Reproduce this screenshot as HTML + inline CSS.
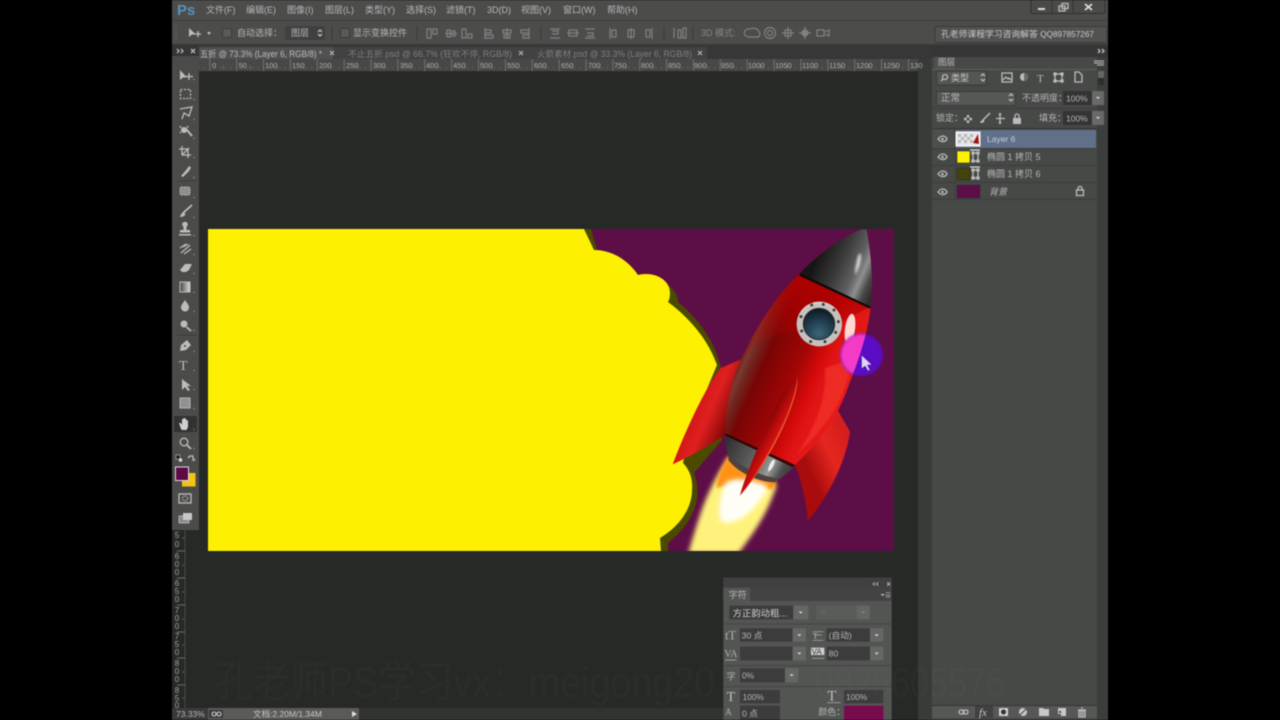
<!DOCTYPE html>
<html lang="zh"><head><meta charset="utf-8"><title>Photoshop</title>
<style>
html,body{margin:0;padding:0;width:1280px;height:720px;overflow:hidden;background:#000}
svg{display:block;position:absolute;left:0;top:0;font-family:"Liberation Sans","Noto Sans CJK SC",sans-serif;filter:blur(.5px)}
text{fill:#b6b6b6;font-size:9px}
.d{fill:#858585}
.r{font-size:7.5px;fill:#adadad}
.v{font-size:8px;fill:#a0a0a0;text-anchor:middle}
.i{fill:none;stroke:#bcbcbc;stroke-width:1.3}
.f{fill:#bcbcbc}
.a{fill:none;stroke:#808080;stroke-width:1.2}
</style></head><body>
<svg width="1280" height="720" viewBox="0 0 1280 720" xmlns="http://www.w3.org/2000/svg">
<defs>
<pattern id="maj" x="209.3" y="0" width="26.87" height="14" patternUnits="userSpaceOnUse"><rect width="1" height="14" fill="#8a8a8a"/><rect x="13.4" y="9" width="1" height="4" fill="#7a7a7a"/><rect x="5.4" y="11" width="1" height="2" fill="#6c6c6c"/><rect x="10.7" y="11" width="1" height="2" fill="#6c6c6c"/><rect x="16" y="11" width="1" height="2" fill="#6c6c6c"/><rect x="21.4" y="11" width="1" height="2" fill="#6c6c6c"/></pattern>
<linearGradient id="body" gradientUnits="userSpaceOnUse" x1="215" y1="405" x2="600" y2="575"><stop offset="0" stop-color="#a81a10"/><stop offset=".035" stop-color="#6a1410"/><stop offset=".09" stop-color="#7a3a32"/><stop offset=".14" stop-color="#70241e"/><stop offset=".22" stop-color="#780505"/><stop offset=".45" stop-color="#a20606"/><stop offset=".58" stop-color="#d40a0a"/><stop offset=".66" stop-color="#e01414"/><stop offset=".93" stop-color="#e8201e"/><stop offset="1" stop-color="#ff7a40"/></linearGradient>
<linearGradient id="top" gradientUnits="userSpaceOnUse" x1="440" y1="150" x2="430" y2="420"><stop offset="0" stop-color="#b00000"/><stop offset="1" stop-color="#b00000" stop-opacity="0"/></linearGradient>
<linearGradient id="nose" gradientUnits="userSpaceOnUse" x1="470" y1="100" x2="650" y2="180"><stop offset="0" stop-color="#161616"/><stop offset=".35" stop-color="#3a3a3a"/><stop offset=".62" stop-color="#626262"/><stop offset=".74" stop-color="#8f8f8f"/><stop offset=".87" stop-color="#484848"/><stop offset="1" stop-color="#2c2c2c"/></linearGradient>
<linearGradient id="finl" gradientUnits="userSpaceOnUse" x1="90" y1="520" x2="250" y2="590"><stop offset="0" stop-color="#c81212"/><stop offset=".4" stop-color="#e02020"/><stop offset=".72" stop-color="#960b0b"/><stop offset="1" stop-color="#300404"/></linearGradient>
<linearGradient id="finr" gradientUnits="userSpaceOnUse" x1="430" y1="700" x2="560" y2="640"><stop offset="0" stop-color="#a80c0c"/><stop offset=".55" stop-color="#e6261f"/><stop offset="1" stop-color="#d51e1e"/></linearGradient>
<linearGradient id="base" gradientUnits="userSpaceOnUse" x1="200" y1="650" x2="400" y2="750"><stop offset="0" stop-color="#303030"/><stop offset=".5" stop-color="#6a6a6a"/><stop offset=".68" stop-color="#9a9a9a"/><stop offset=".83" stop-color="#4d4d4d"/><stop offset="1" stop-color="#333"/></linearGradient>
<linearGradient id="cf" gradientUnits="userSpaceOnUse" x1="300" y1="620" x2="365" y2="655"><stop offset="0" stop-color="#7e0404"/><stop offset=".55" stop-color="#c80d0d"/><stop offset="1" stop-color="#e62a1e"/></linearGradient>
<radialGradient id="glass" cx=".5" cy=".8" r=".75"><stop offset="0" stop-color="#3d6478"/><stop offset=".6" stop-color="#1e3b4c"/><stop offset="1" stop-color="#0f1d26"/></radialGradient>
<linearGradient id="grad" x1="0" y1="0" x2="1" y2="0"><stop offset="0" stop-color="#444"/><stop offset="1" stop-color="#ddd"/></linearGradient>
<clipPath id="cv"><rect x="208" y="229" width="686" height="322"/></clipPath>
<clipPath id="bc"><path transform="translate(660 225) scale(.3333)" d="M420 145C350 210 285 310 240 410C210 480 197 560 197 625L405 720C470 660 530 590 570 470C595 410 625 320 632 245Z"/></clipPath>
<filter id="b8" x="-30%" y="-30%" width="160%" height="160%"><feGaussianBlur stdDeviation="7"/></filter>
<filter id="b4" x="-30%" y="-30%" width="160%" height="160%"><feGaussianBlur stdDeviation="4"/></filter>
<filter id="b2" x="-30%" y="-30%" width="160%" height="160%"><feGaussianBlur stdDeviation="2"/></filter>
<filter id="b1" x="-30%" y="-30%" width="160%" height="160%"><feGaussianBlur stdDeviation="1.3"/></filter>
</defs>

<rect width="1280" height="720" fill="#000"/>
<rect x="172" y="0" width="936" height="720" fill="#272927"/>
<rect x="172" y="0" width="936" height="46" fill="#4c4d4b"/>
<rect x="172" y="20" width="936" height="1" fill="#3d3e3c"/>
<rect x="172" y="44" width="936" height="2" fill="#383938"/>
<rect x="172" y="45" width="27" height="485" fill="#4b4c4a"/>
<rect x="172" y="45" width="27" height="11" fill="#353635"/>
<rect x="199" y="46" width="733" height="13" fill="#363736"/>
<rect x="199" y="47" width="134" height="12" fill="#505150"/>
<rect x="333" y="47" width="374" height="12" fill="#414241"/>
<rect x="199" y="59" width="719" height="13" fill="#484947"/>
<rect x="199" y="59" width="719" height="13" fill="url(#maj)" opacity=".6"/>
<rect x="199" y="71" width="719" height="1" fill="#2b2c2b"/>
<rect x="918" y="59" width="14" height="661" fill="#393b39"/>
<rect x="932" y="46" width="165" height="674" fill="#474947"/>
<rect x="1097" y="46" width="11" height="674" fill="#3c3e3c"/>
<rect x="932" y="46" width="176" height="11" fill="#353635"/>

<!-- Photoshop logo & menu -->
<text x="177" y="15" style="font-size:15px;font-weight:bold;fill:#5a90bd">Ps</text>
<text x="206" y="13">文件(F)</text><text x="246" y="13">编辑(E)</text><text x="287" y="13">图像(I)</text><text x="325" y="13">图层(L)</text><text x="365" y="13">类型(Y)</text><text x="406" y="13">选择(S)</text><text x="446" y="13">滤镜(T)</text><text x="487" y="13">3D(D)</text><text x="521" y="13">视图(V)</text><text x="563" y="13">窗口(W)</text><text x="607" y="13">帮助(H)</text>
<!-- window buttons -->
<rect x="1031" y="-2" width="74" height="15.500" rx="2" fill="#4a4b49" stroke="#2f302f"/>
<line x1="1052" y1="0" x2="1052" y2="13" stroke="#333"/><line x1="1073" y1="0" x2="1073" y2="13" stroke="#333"/>
<rect x="1038" y="8" width="7" height="2" fill="#ddd"/>
<rect x="1059" y="6" width="6" height="5" class="i"/><rect x="1062" y="3.500" width="6" height="5" class="i"/>
<path d="M1085 4L1092 10M1092 4L1085 10" stroke="#ddd" stroke-width="1.800"/>

<!-- Options bar -->
<path d="M176 26V41" stroke="#6c6c6c" stroke-dasharray="1 2" stroke-width="1.500"/>
<path d="M189 28V37L192 34.500H196Z" class="f"/><path d="M198 31V37M195 34H201" class="i" stroke-width="1"/>
<path d="M207 32H211L209 35Z" class="f"/>
<rect x="222.500" y="28.500" width="9" height="9" rx="1" fill="#5a5b59" stroke="#3a3b39"/>
<text x="237" y="36">自动选择：</text>
<rect x="285" y="26" width="40" height="14" rx="2" fill="#3f403f"/>
<text x="291" y="36">图层</text><path d="M318 32L320 30L322 32M318 34L320 36L322 34" class="i" stroke-width=".8"/>
<line x1="332" y1="26" x2="332" y2="41" stroke="#3a3b39"/>
<rect x="340.500" y="28.500" width="9" height="9" rx="1" fill="#5a5b59" stroke="#3a3b39"/>
<text x="353" y="36">显示变换控件</text>
<line x1="417" y1="26" x2="417" y2="41" stroke="#3a3b39"/>
<g class="a">
<path d="M427 29h4v9h-4zM433 29h4v5h-4z"/><path d="M445 33.500h12M447 30h3v7h-3zM452 31h3v5h-3z"/><path d="M462 29h4v9h-4zM468 34h4v4h-4z"/>
<path d="M485 28v11M485 30h6v3h-6zM485 35h8v3h-8z"/><path d="M507 28v11M503 30h8v3h-8zM504 35h6v3h-6z"/><path d="M529 28v11M521 30h8v3h-8zM523 35h6v3h-6z"/>
</g>
<line x1="541" y1="26" x2="541" y2="41" stroke="#3a3b39"/>
<g class="a">
<path d="M550 29h10M552 31h6v3h-6M550 38h10"/><path d="M567 33h12M569 30h8v6h-8z"/><path d="M585 38h10M587 33h6v3h-6M585 29h10"/>
<path d="M610 28v11M612 30h4v7h-4z"/><path d="M631 28v11M628 30h6v7h-6z"/><path d="M652 28v11M646 30h4v7h-4z"/>
</g>
<line x1="664" y1="26" x2="664" y2="41" stroke="#3a3b39"/>
<path class="a" d="M674 28v10M678 30h3v8h-3zM683 28h3v10h-3z"/>
<line x1="693" y1="26" x2="693" y2="41" stroke="#3a3b39"/>
<text x="701" y="36" class="d">3D 模式:</text>
<g class="a"><path d="M746 36a5 4 0 0 1 4-7a6 5 0 0 1 9 3a3 3 0 0 1-3 5h-8z"/><circle cx="770" cy="33" r="5.500"/><circle cx="770" cy="33" r="2.500"/><path d="M788 27v12M782 33h12M785 30h6v6h-6z"/><path d="M805 27v12M799 33h12"/><circle cx="805" cy="33" r="3" fill="#808080"/><path d="M817 30h7v6h-7zM825 32l4-2v6l-4-2"/></g>
<rect x="935" y="26.500" width="172" height="16" rx="1" fill="#525351" stroke="#393a39"/>
<text x="941" y="37" style="fill:#c8c8c8;font-size:8.800px">孔老师课程学习咨询解答 <tspan style="font-size:8.200px">QQ897857267</tspan></text>

<!-- Tabs -->
<text x="200" y="57" textLength="122" lengthAdjust="spacingAndGlyphs" style="font-size:8.800px;fill:#bcbcbc">五折 @ 73.3% (Layer 6, RGB/8) *</text>
<text x="348" y="57" textLength="164" lengthAdjust="spacingAndGlyphs" style="font-size:8.800px;fill:#7f7f7f">不止五折.psd @ 66.7% (狂欢不停, RGB/8)</text>
<text x="537" y="57" textLength="155" lengthAdjust="spacingAndGlyphs" style="font-size:8.800px;fill:#7f7f7f">火箭素材.psd @ 33.3% (Layer 6, RGB/8)</text>
<path d="M330 51l4 4M334 51l-4 4M519 51l4 4M523 51l-4 4M698 51l4 4M702 51l-4 4" stroke="#c0c0c0"/>
<path d="M177 49l2 2-2 2M181 49l2 2-2 2M191 49l4 4M195 49l-4 4" class="i" stroke-width=".8"/>
<path d="M1098 49l2 2-2 2M1102 49l2 2-2 2" class="i" stroke-width=".8"/>

<!-- Ruler labels -->
<g><text class="r" x="212" y="68">0</text><text class="r" x="238.500" y="68">50</text><text class="r" x="265" y="68">100</text><text class="r" x="292" y="68">150</text><text class="r" x="319" y="68">200</text><text class="r" x="346" y="68">250</text><text class="r" x="373" y="68">300</text><text class="r" x="400" y="68">350</text><text class="r" x="426" y="68">400</text><text class="r" x="453" y="68">450</text><text class="r" x="480" y="68">500</text><text class="r" x="507" y="68">550</text><text class="r" x="534" y="68">600</text><text class="r" x="561" y="68">650</text><text class="r" x="588" y="68">700</text><text class="r" x="614" y="68">750</text><text class="r" x="641" y="68">800</text><text class="r" x="668" y="68">850</text><text class="r" x="694" y="68">900</text><text class="r" x="721" y="68">950</text><text class="r" x="748" y="68">1000</text><text class="r" x="775" y="68">1050</text><text class="r" x="802" y="68">1100</text><text class="r" x="829" y="68">1150</text><text class="r" x="856" y="68">1200</text><text class="r" x="883" y="68">1250</text><text class="r" x="910" y="68">130</text></g>
<path d="M185 530V708" stroke="#4a4b49"/>
<path d="M177 551h8M177 578h8M177 605h8M177 632h8M177 658h8M177 685h8" stroke="#6c6c6c"/>
<path d="M182 538h3M182 565h3M182 592h3M182 619h3M182 645h3M182 672h3M182 698h3" stroke="#555"/>
<text class="v" x="177" y="538">5</text><text class="v" x="177" y="547">0</text>
<text class="v" x="177" y="559">6</text><text class="v" x="177" y="567">0</text><text class="v" x="177" y="575">0</text>
<text class="v" x="177" y="586">6</text><text class="v" x="177" y="594">5</text><text class="v" x="177" y="602">0</text>
<text class="v" x="177" y="613">7</text><text class="v" x="177" y="621">0</text><text class="v" x="177" y="629">0</text>
<text class="v" x="177" y="639">7</text><text class="v" x="177" y="647">5</text><text class="v" x="177" y="655">0</text>
<text class="v" x="177" y="666">8</text><text class="v" x="177" y="674">0</text><text class="v" x="177" y="682">0</text>
<text class="v" x="177" y="693">8</text><text class="v" x="177" y="701">5</text><text class="v" x="177" y="708">0</text>

<!-- Toolbar -->
<path d="M180 70V80L183 77.500H187Z" class="f"/><path d="M189 73v7M186 76.500h7" class="i"/>
<rect x="180.500" y="89.500" width="10" height="9" class="i" stroke-dasharray="2 1.500"/>
<path d="M180 109L192 107L189 116L184 113L182 119" class="i"/>
<path d="M186 129L192 136" stroke="#bcbcbc" stroke-width="2"/><circle cx="184" cy="130" r="3" class="f"/><path d="M180 126l1 2M188 126l-1 2M180 133l1-1" class="i" stroke-width=".8"/>
<path d="M182 146V155H191M179 149H188V158" class="i" stroke-width="1.600"/><path d="M182 155L189 148" class="i" stroke-width=".8"/>
<path d="M181 176L187 169L189 171L183 177ZM187 169L189 166L191 167.500L189 171" class="f"/>
<line x1="177" y1="181" x2="197" y2="181" stroke="#3b3c3a"/>
<rect x="180" y="187" width="10" height="8" rx="1.500" fill="#8f8f8f" stroke="#bcbcbc" stroke-dasharray="1.500 1"/>
<path d="M192 205L183 213" stroke="#bcbcbc" stroke-width="1.800"/><path d="M180 217C181 213 183 212 185 213C186 215 184 217 180 217Z" class="f"/>
<circle cx="185" cy="224.500" r="2.800" class="f"/><rect x="183.500" y="226" width="3" height="4" class="f"/><rect x="180" y="230" width="10" height="2.500" class="f"/><rect x="179" y="234" width="12" height="1.500" class="f"/>
<path d="M181 253L190 245M183 247L188 244M180 248L186 244" class="i"/><path d="M184 254L191 249" class="i"/>
<path d="M180 270L185 264H192L189 270L186 272H182Z" class="f"/>
<rect x="180" y="282" width="10" height="10" fill="url(#grad)" stroke="#bcbcbc"/>
<path d="M185 300C187 303 189 305 189 307.500A4 4 0 0 1 181 307.500C181 305 183 303 185 300Z" class="f"/>
<circle cx="184" cy="324" r="3.500" class="f"/><path d="M186.500 327L191 331" stroke="#bcbcbc" stroke-width="1.800"/>
<path d="M180 351L181 345L187 340L191 345L186 350Z" class="f"/><circle cx="185" cy="346" r="1" fill="#4b4c4a"/>
<line x1="177" y1="335" x2="197" y2="335" stroke="#3b3c3a"/>
<text x="179" y="370" style="font-size:14px;font-family:'Liberation Serif',serif;fill:#bcbcbc">T</text>
<path d="M182 379V390L185 387L188 391L190 390L187 386H191Z" class="f"/>
<rect x="180" y="398" width="10" height="10" fill="#919191" stroke="#b4b4b4"/>
<rect x="174" y="416" width="23" height="16" rx="1" fill="#313231"/>
<path d="M181 429L179 423L181 423L182 425V419H183.500V424V418H185V424V419H186.500V424V420.500H188V427L186.500 430H182Z" fill="#d0d0d0"/>
<circle cx="184" cy="442" r="3.800" class="i" fill="#888"/><path d="M187 445L191 449" stroke="#bcbcbc" stroke-width="1.800"/>
<rect x="176" y="455" width="4" height="4" fill="#111" stroke="#bbb" stroke-width=".7"/><rect x="178.500" y="458" width="4" height="4" fill="#ddd" stroke="#222" stroke-width=".5"/>
<path d="M189 456h4v4M188 458l2-2M193 461l2-2" class="i" stroke-width=".9"/>
<rect x="182" y="473" width="13.500" height="13.500" fill="#f4c414"/>
<rect x="175.500" y="467" width="13" height="13.500" fill="#5d0a45" stroke="#e4d6dc"/>
<rect x="179" y="494" width="12" height="9" class="i" stroke-width="1"/><circle cx="185" cy="498.500" r="2.500" class="i" stroke-dasharray="1 1" stroke-width=".9"/>
<rect x="179" y="516" width="10" height="7" fill="#8a8a8a" stroke="#bcbcbc" stroke-width=".8"/><rect x="183" y="513" width="9" height="7" fill="#c8c8c8"/>
<path d="M193 80l1.500-1.500v1.500zM193 100l1.500-1.500v1.500zM193 120l1.500-1.500v1.500zM193 139l1.500-1.500v1.500zM193 158l1.500-1.500v1.500zM193 178l1.500-1.500v1.500zM193 198l1.500-1.500v1.500zM193 218l1.500-1.500v1.500zM193 236l1.500-1.500v1.500zM193 255l1.500-1.500v1.500zM193 274l1.500-1.500v1.500zM193 293l1.500-1.500v1.500zM193 312l1.500-1.500v1.500zM193 331l1.500-1.500v1.500zM193 352l1.500-1.500v1.500zM193 371l1.500-1.500v1.500zM193 390l1.500-1.500v1.500zM193 409l1.500-1.500v1.500zM193 430l1.500-1.500v1.500zM193 449l1.500-1.500v1.500z" fill="#aaa"/>

<!-- Canvas -->
<rect x="208" y="229" width="686" height="322" fill="#5e0e47"/>
<g clip-path="url(#cv)">
<path d="M584 222H589L597 250L590 270L660 300L668 285C675 290 678 296 678 302C702 322 716 345 721 368L722 440L694 473C700 490 702 515 668 543L668 560H208V222Z" fill="#4b4b00"/>
<path d="M208 229H584L594 250C612 250 628 260 638 275C655 271 670 280 670 293C670 298 669 300 668 302C695 322 710 345 717 365L690 430L683 463C690 470 693 480 692 490C692 508 680 526 660 538L661 551H208Z" fill="#fdf000"/>
<g transform="translate(660 225) scale(.33333)">
<path d="M205 695C170 750 140 810 120 870C105 915 95 950 85 985H235C285 920 325 860 350 780L300 740Z" fill="#fff27c" filter="url(#b8)"/>
<path d="M205 695C185 730 170 760 170 790C220 770 300 785 335 795L350 770L290 730Z" fill="#ff9212" filter="url(#b4)"/>
<path d="M195 775C180 820 170 870 185 890C240 905 295 845 325 785C280 760 220 755 195 775Z" fill="#fffef6" filter="url(#b8)"/>
<path d="M250 400L180 430C130 500 75 620 38 718C90 695 150 660 195 630Z" fill="url(#finl)"/>
<path d="M530 550L570 620C560 700 510 810 443 888C440 830 425 780 415 745L405 720Z" fill="url(#finr)"/>
<path d="M197 625C196 650 198 675 207 695C240 730 310 765 360 762C375 750 395 735 405 720Z" fill="url(#base)"/>
<path d="M205 690C240 725 310 758 360 760L345 772C300 772 235 745 205 705Z" fill="#4f4240"/>
<path d="M338 705C328 718 322 732 325 740C335 735 345 718 345 705Z" fill="#eee"/>
<path d="M420 145C350 210 285 310 240 410C210 480 197 560 197 625L405 720C470 660 530 590 570 470C595 410 625 320 632 245Z" fill="url(#body)"/>
<path d="M420 145C350 210 285 310 240 410C300 340 380 300 470 330L632 245Z" fill="url(#top)"/>
<path d="M197 625L405 720L398 726L196 632Z" fill="#300404"/>
<path d="M495 430C500 520 470 600 410 690C470 630 530 570 560 470L580 400Z" fill="#f2302c" opacity=".75" filter="url(#b2)"/>
<path d="M420 145C480 80 560 30 605 13H620C635 100 640 180 632 245Z" fill="url(#nose)"/>
<path d="M420 145L632 245L630 251L418 152Z" fill="#0a0a0a"/>
<path d="M595 90C590 110 585 130 585 150C595 135 605 110 603 85Z" fill="#dcdcdc" filter="url(#b4)"/>
<ellipse cx="478" cy="297" rx="68" ry="67" fill="#d8d4d0"/><ellipse cx="478" cy="300" rx="68" ry="65" fill="#a39f9b" opacity=".35"/>
<circle cx="477" cy="297" r="47" fill="url(#glass)" stroke="#26282a" stroke-width="3"/>
<g fill="#3a3a3c"><circle cx="455" cy="240" r="4.500"/><circle cx="490" cy="238" r="4.500"/><circle cx="522" cy="255" r="4.500"/><circle cx="535" cy="290" r="4.500"/><circle cx="527" cy="322" r="4.500"/><circle cx="495" cy="350" r="4.500"/><circle cx="452" cy="350" r="4.500"/><circle cx="425" cy="318" r="4.500"/><circle cx="423" cy="275" r="4.500"/></g>
<ellipse cx="570" cy="312" rx="15" ry="46" transform="rotate(8 570 312)" fill="#ffd8d2"/>
<path d="M412 455C385 470 340 550 305 640C280 700 250 770 240 812C285 760 345 670 385 570C405 520 415 480 412 455Z" fill="url(#cf)"/>
<path d="M412 455C415 480 405 520 385 570C345 670 285 760 240 812C290 750 342 660 381 570C400 520 410 485 412 455Z" fill="#ee5a30"/>
<circle cx="605" cy="390" r="63" fill="#5a0fc4" filter="url(#b4)"/>
</g>
<g clip-path="url(#bc)"><circle cx="861.700" cy="355" r="21" fill="#f43ac8" filter="url(#b1)"/></g>
<path d="M861.500 355V369L865 366L868 371L870 370L867.500 365H872Z" fill="#ddd6f5" stroke="#40108a" stroke-width=".5"/>
</g>

<!-- Layers panel -->
<rect x="935" y="57" width="20" height="12" fill="#525351"/>
<text x="938" y="65" style="font-size:8.500px">图层</text>
<path d="M1094 61h10M1094 63h10M1097 65h7" stroke="#bcbcbc" stroke-width=".9"/>
<rect x="932" y="69" width="165" height="1" fill="#5d5f5d"/>
<rect x="936.500" y="71" width="50" height="14" rx="2" fill="#545654" stroke="#383938"/>
<circle cx="945" cy="77" r="2.500" class="i" stroke-width=".9"/><path d="M943 79l-2 2" class="i"/>
<text x="951" y="81" style="fill:#cccccc">类型</text><path d="M981 76l2-2 2 2M981 79l2 2 2-2" class="i" stroke-width=".8"/>
<g class="i" stroke-width="1"><rect x="1002" y="73" width="10" height="9"/><path d="M1003 80l3-3 2 2 1-1 2 2"/></g>
<circle cx="1024" cy="77" r="4" class="f"/><path d="M1024 73a4 4 0 0 1 0 8z" fill="#6a6a6a"/>
<text x="1037" y="82" style="font-size:11px;font-family:'Liberation Serif',serif;fill:#bcbcbc">T</text>
<path d="M1055 74h7v7h-7zM1054 73h2v2h-2zM1061 73h2v2h-2zM1054 80h2v2h-2zM1061 80h2v2h-2z" class="i" stroke-width=".8"/>
<path d="M1075 72h4l3 3v7h-7z" class="i" stroke-width="1"/>
<rect x="1098" y="71" width="6" height="7" fill="#666"/><rect x="1098" y="78" width="6" height="7" fill="#2c2d2c"/>
<rect x="936.500" y="91.500" width="79" height="14" rx="1" fill="#565856" stroke="#393a39"/>
<text x="941" y="101" style="font-size:9.500px">正常</text><path d="M1009 96l2-2 2 2M1009 99l2 2 2-2" class="i" stroke-width=".8"/>
<text x="1022" y="101">不透明度：</text>
<rect x="1063" y="91" width="29" height="14" fill="#333433"/><text x="1066" y="101.500" style="font-size:8.500px">100%</text>
<rect x="1092" y="91" width="12" height="14" fill="#686a68"/><path d="M1096 97h4l-2 2z" fill="#ddd"/>
<rect x="932" y="108" width="165" height="1" fill="#3b3c3b"/>
<text x="936" y="121">锁定：</text>
<rect x="964" y="115" width="8" height="8" fill="#bbb"/><path d="M964 115h2.700v2.700H964zM969.300 115h2.700v2.700h-2.700zM966.700 117.700h2.700v2.700h-2.700zM964 120.400h2.700v2.700H964zM969.300 120.400h2.700v2.700h-2.700z" fill="#454545"/>
<path d="M990 113L983 120" stroke="#bcbcbc" stroke-width="1.500"/><path d="M980 123C981 120 983 119 984 120C985 122 983 123 980 123Z" class="f"/>
<path d="M1000 114v9M996 118.500h9M999 115l1-1.500 1 1.500M999 122l1 1.500 1-1.500" class="i" stroke-width="1"/>
<rect x="1013" y="118" width="8" height="6" class="f"/><path d="M1015 118v-2a2 2 0 0 1 4 0v2" class="i" stroke-width="1.200"/>
<text x="1039" y="121">填充：</text>
<rect x="1063" y="111" width="29" height="14" fill="#333433"/><text x="1066" y="121.500" style="font-size:8.500px">100%</text>
<rect x="1092" y="111" width="12" height="14" fill="#686a68"/><path d="M1096 117h4l-2 2z" fill="#ddd"/>
<rect x="932" y="128" width="165" height="1" fill="#343534"/>
<rect x="955" y="130" width="141" height="18" fill="#607089"/>
<rect x="932" y="130" width="23" height="18" fill="#4d4f4d"/>
<path d="M932 148.500H1097M932 165.500H1097M932 182.500H1097M932 199.500H1097M955 130V200" stroke="#3c3d3c"/>
<g class="i" stroke-width=".9"><path d="M938 139C941 135 945 135 947 139C945 142.500 941 142.500 938 139Z"/><path d="M938 157C941 153 945 153 947 157C945 160.500 941 160.500 938 157Z"/><path d="M938 174C941 170 945 170 947 174C945 177.500 941 177.500 938 174Z"/><path d="M938 192C941 188 945 188 947 192C945 195.500 941 195.500 938 192Z"/></g>
<circle cx="942.500" cy="139" r="1.300" class="f"/><circle cx="942.500" cy="157" r="1.300" class="f"/><circle cx="942.500" cy="174" r="1.300" class="f"/><circle cx="942.500" cy="192" r="1.300" class="f"/>
<rect x="956" y="132" width="24" height="14" fill="#e6e6e6" stroke="#fff"/>
<path d="M958 134h3v3h-3zM964 134h3v3h-3zM970 134h3v3h-3zM961 137h3v3h-3zM967 137h3v3h-3zM958 140h3v3h-3zM964 140h3v3h-3zM970 140h3v3h-3z" fill="#b9b9b9"/>
<path d="M973 143L978 134L979 144Z" fill="#a01313"/>
<text x="987" y="142" style="font-size:8.500px;fill:#c8ced8">Layer 6</text>
<rect x="957" y="151" width="13" height="12" fill="#fdf000" stroke="#222" stroke-width=".5"/>
<rect x="957" y="168" width="13" height="12" fill="#43430a" stroke="#222" stroke-width=".5"/>
<path d="M970 150h10M970 167h10" stroke="#e0e0e0" stroke-width="1.200"/>
<path d="M973 153h5v8h-5zM972 152h2v2h-2zM977 152h2v2h-2zM972 160h2v2h-2zM977 160h2v2h-2zM973 170h5v8h-5zM972 169h2v2h-2zM977 169h2v2h-2zM972 177h2v2h-2zM977 177h2v2h-2z" class="i" stroke-width=".6"/>
<text x="987" y="160">椭圆 1 拷贝 5</text>
<text x="987" y="177">椭圆 1 拷贝 6</text>
<rect x="957" y="185" width="23" height="13" fill="#5e0e47" stroke="#2c2d2c" stroke-width=".6"/>
<text x="989" y="195" style="font-style:italic">背景</text>
<rect x="1076.500" y="190" width="7" height="5.500" class="i" stroke-width=".9"/><path d="M1078 190v-1.500a2 2 0 0 1 4 0v1.500" class="i" stroke-width=".9"/>
<!-- Layers bottom bar -->
<rect x="932" y="706" width="165" height="12" fill="#565856"/>
<rect x="975" y="706" width="18" height="12" fill="#404140"/>
<rect x="932" y="705" width="165" height="1" fill="#343534"/>
<rect x="959" y="710" width="5" height="4" rx="2" class="i" stroke-width=".9"/><rect x="963" y="710" width="5" height="4" rx="2" class="i" stroke-width=".9"/>
<text x="979" y="716" style="font-style:italic;font-family:'Liberation Serif',serif;font-size:11px;fill:#c8c8c8">fx</text>
<rect x="999" y="708" width="9" height="8" fill="#d0d0d0"/><circle cx="1003.500" cy="712" r="2.500" fill="#333"/>
<circle cx="1023" cy="712" r="4" fill="#c8c8c8"/><path d="M1020 715l6-6" stroke="#444"/>
<path d="M1039 708h4l1 1h5v7h-10z" fill="#c8c8c8"/>
<path d="M1058 708h8v8h-5v-2h-3z" fill="#c8c8c8"/><rect x="1059" y="711" width="2" height="2" fill="#444"/>
<path d="M1078 710h8M1081 708h2M1079 711h6v6h-6zM1081 712v4M1083 712v4" class="i" stroke-width=".9"/>

<!-- Status bar -->
<rect x="172" y="708" width="552" height="12" fill="#313331"/>
<rect x="208" y="708" width="151" height="12" fill="#5a5b59"/>
<rect x="172" y="708" width="36" height="12" fill="#393a39"/>
<text x="176" y="717" style="font-size:8.500px">73.33%</text>
<rect x="209" y="710" width="14" height="8" fill="#383938"/><circle cx="214" cy="714" r="2" class="i" stroke-width=".9"/><circle cx="219" cy="714" r="2" class="i" stroke-width=".9"/>
<text x="253" y="717" style="font-size:8.500px;fill:#c8c8c8">文档:2.20M/1.34M</text>
<path d="M352 711l5 3-5 3z" fill="#e0e0e0"/>

<!-- Character panel -->
<g transform="translate(720 575) scale(.33333)">
<rect x="10" y="8" width="505" height="440" fill="#535553"/>
<rect x="10" y="8" width="505" height="30" fill="#3f403f"/>
<rect x="10" y="38" width="505" height="40" fill="#424342"/>
<rect x="10" y="38" width="80" height="40" fill="#535553"/>
<text x="26" y="69" style="font-size:27px">字符</text>
<path d="M465 22l-6 5 6 5M475 22l-6 5 6 5M501 22l10 10M511 22l-10 10" fill="none" stroke="#bcbcbc" stroke-width="2.500"/>
<path d="M497 53h14M497 60h14M497 66h14M484 58h8l-4 4z" fill="#bcbcbc" stroke="#bcbcbc" stroke-width="2"/>
<rect x="28" y="92" width="192" height="41" fill="#3b3c3b"/><text x="38" y="124" style="font-size:28px;fill:#cccccc">方正韵动粗...</text>
<rect x="220" y="92" width="45" height="41" fill="#656765"/><path d="M236 110h12l-6 6z" fill="#ddd"/>
<rect x="290" y="92" width="120" height="41" fill="#5a5c5a"/><rect x="304" y="112" width="12" height="2" fill="#777"/>
<rect x="410" y="92" width="40" height="41" fill="#646664"/><path d="M424 110h12l-6 6z" fill="#888"/>
<path d="M10 147H515M10 272H515M10 335H515" stroke="#434443" stroke-width="3"/>
<rect x="60" y="160" width="158" height="40" fill="#3b3c3b"/><rect x="218" y="160" width="40" height="40" fill="#656765"/><path d="M232 178h12l-6 6z" fill="#ddd"/>
<rect x="320" y="160" width="130" height="40" fill="#3b3c3b"/><rect x="450" y="160" width="40" height="40" fill="#656765"/><path d="M464 178h12l-6 6z" fill="#ddd"/>
<rect x="60" y="215" width="158" height="41" fill="#3b3c3b"/><rect x="218" y="215" width="40" height="41" fill="#656765"/><path d="M232 233h12l-6 6z" fill="#ddd"/>
<rect x="320" y="215" width="130" height="41" fill="#3b3c3b"/><rect x="450" y="215" width="40" height="41" fill="#656765"/><path d="M464 233h12l-6 6z" fill="#ddd"/>
<rect x="60" y="280" width="135" height="42" fill="#3b3c3b"/><rect x="195" y="280" width="40" height="42" fill="#656765"/><path d="M209 298h12l-6 6z" fill="#ddd"/>
<rect x="60" y="345" width="120" height="40" fill="#3b3c3b"/><rect x="372" y="345" width="118" height="40" fill="#3b3c3b"/>
<rect x="60" y="392" width="120" height="43" fill="#3b3c3b"/><rect x="372" y="392" width="118" height="48" fill="#780a4e"/>
<text x="65" y="190" style="font-size:26px">30 点</text><text x="326" y="190" style="font-size:26px">(自动)</text>
<text x="326" y="244" style="font-size:26px">80</text>
<text x="66" y="310" style="font-size:25px">0%</text>
<text x="68" y="375" style="font-size:25px">100%</text><text x="378" y="375" style="font-size:25px">100%</text>
<text x="66" y="424" style="font-size:26px">0 点</text><text x="295" y="420" style="font-size:27px">颜色：</text>
<g style="font-family:'Liberation Serif',serif">
<text x="15" y="193" style="font-size:38px;fill:#b0b0b0">tT</text>
<text x="278" y="190" style="font-size:26px;fill:#b0b0b0">T</text>
<text x="13" y="246" style="font-size:30px;fill:#b0b0b0">VA</text>
<text x="20" y="378" style="font-size:42px;fill:#c0c0c0">T</text>
<text x="322" y="376" style="font-size:44px;fill:#c0c0c0">T</text>
<text x="15" y="420" style="font-size:28px;fill:#b0b0b0">A</text>
</g>
<rect x="273" y="218" width="40" height="22" fill="#d0d0d0"/><text x="275" y="238" style="font-size:24px;fill:#333">VA</text>
<path d="M276 250h36M15 255h34M322 383h40" stroke="#bcbcbc" stroke-width="2"/>
<path d="M278 170h32M282 180h24M278 196h32" stroke="#b0b0b0" stroke-width="2"/>
<text x="20" y="314" style="font-size:27px;fill:#b0b0b0">字</text>
</g>

<!-- Watermark -->
<g>
<text x="215" y="697" textLength="500" lengthAdjust="spacingAndGlyphs" style="font-size:43px;fill:#8a8a8a;opacity:.045">孔老师PS学习vx：meigong20</text>
<text x="815" y="697" textLength="190" lengthAdjust="spacingAndGlyphs" style="font-size:43px;fill:#8a8a8a;opacity:.045">0825605576</text>
</g>
</svg>
</body></html>
